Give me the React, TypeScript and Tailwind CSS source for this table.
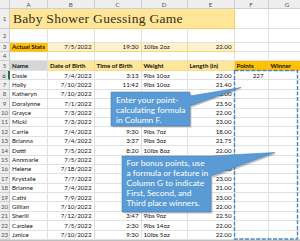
import React from 'react';

// cells hidden by the callouts are left blank
const data: string[][] = [
  ['Dasie', '7/4/2022', '3:13', '9lbs 10oz', '22.00', '227'],
  ['Holly', '7/10/2022', '11:42', '9lbs 10oz', '21.40', ''],
  ['Katheryn', '7/10/2022', '', '', '23.00', ''],
  ['Doralynne', '7/1/2022', '', '', '23.50', ''],
  ['Grayce', '7/3/2022', '', '', '22.00', ''],
  ['Micki', '7/3/2022', '', '', '23.00', ''],
  ['Carrie', '7/4/2022', '9:30', '9lbs 7oz', '18.00', ''],
  ['Brianna', '7/4/2022', '3:37', '9lbs 3oz', '21.75', ''],
  ['Dotti', '7/5/2022', '8:20', '10lbs 8oz', '22.00', ''],
  ['Annmarie', '7/5/2022', '', '', '22.00', ''],
  ['Helene', '7/18/2022', '', '', '22.00', ''],
  ['Krystalle', '7/7/2022', '', '', '23.00', ''],
  ['Brianne', '7/4/2022', '', '', '21.00', ''],
  ['Cathi', '7/9/2022', '', '', '23.00', ''],
  ['Gillian', '7/10/2022', '', '', '22.00', ''],
  ['Sherill', '7/12/2022', '3:47', '9lbs 9oz', '22.50', ''],
  ['Carolee', '7/5/2022', '2:30', '9lbs 14oz', '22.00', ''],
  ['Janice', '7/10/2022', '9:30', '10lbs 5oz', '22.00', ''],
];

const cell = 'border-r border-b border-[#e1e1e1] flex items-center px-[2px] whitespace-nowrap';
const num = 'bg-[#eeeeee] border-r border-b border-[#cfcfcf] flex items-center justify-center text-[#555]';

export default function App() {
  return (
    <div className="relative w-[300px] h-[241px] overflow-hidden bg-white text-[6.2px] text-[#111] font-['Lato',sans-serif]">
      <div className="grid grid-cols-[10px_38px_46.5px_47px_46px_47px_34px_38px] grid-rows-[9.3px_20px_13.4px_9px_9.3px_10px_repeat(18,9.4px)]">
        {/* column letters */}
        <div className={num} />
        {['A', 'B', 'C', 'D', 'E', 'F', 'G'].map((c) => (
          <div key={c} className={num}>{c}</div>
        ))}

        {/* row 1 title */}
        <div className={num}>1</div>
        <div className="col-span-5 bg-[#ffe699] border-b border-[#f4cf6a] border-r flex items-center pl-[3px] text-[13.5px] text-[#3a2c16] font-['Liberation_Serif',serif] tracking-[0.3px]">
          Baby Shower Guessing Game
        </div>
        <div className={cell} />
        <div className={cell} />

        {/* row 2 */}
        <div className={num}>2</div>
        {[0, 1, 2, 3, 4, 5, 6].map((i) => <div key={i} className={cell} />)}

        {/* row 3 actual stats */}
        <div className={num}>3</div>
        <div className="bg-[#ffc000] border-r border-b border-[#f2c44d] flex items-center px-[2px] font-bold whitespace-nowrap">Actual Stats</div>
        <div className="bg-[#fff2cc] border-r border-b border-[#f7d67a] flex items-center justify-end px-[2px]">7/5/2022</div>
        <div className="bg-[#fff2cc] border-r border-b border-[#f7d67a] flex items-center justify-end px-[2px]">19:30</div>
        <div className="bg-[#fff2cc] border-r border-b border-[#f7d67a] flex items-center px-[2px]">10lbs 2oz</div>
        <div className="bg-[#fff2cc] border-r border-b border-[#f7d67a] flex items-center justify-end px-[2px]">22.00</div>
        <div className={cell} />
        <div className={cell} />

        {/* row 4 */}
        <div className={num}>4</div>
        {[0, 1, 2, 3, 4, 5, 6].map((i) => <div key={i} className={cell} />)}

        {/* row 5 headers */}
        <div className={num}>5</div>
        <div className="bg-[#d6d6d6] border-r border-b border-[#e1e1e1] flex items-center px-[2px] font-bold">Name</div>
        <div className="bg-[#ffe699] border-r border-b border-[#f7dc8a] flex items-center px-[2px] font-bold whitespace-nowrap">Date of Birth</div>
        <div className="bg-[#ffe699] border-r border-b border-[#f7dc8a] flex items-center px-[2px] font-bold whitespace-nowrap">Time of Birth</div>
        <div className="bg-[#ffe699] border-r border-b border-[#f7dc8a] flex items-center px-[2px] font-bold">Weight</div>
        <div className="bg-[#ffe699] border-r border-b border-[#f7dc8a] flex items-center px-[2px] font-bold whitespace-nowrap">Length (in)</div>
        <div className="bg-[#ffc000] border-r border-b border-[#f2c44d] flex items-center px-[2px] font-bold">Points</div>
        <div className="bg-[#ffc000] border-r border-b border-[#f2c44d] flex items-center px-[2px] font-bold">Winner</div>

        {/* data rows */}
        {data.map((r, i) => (
          <React.Fragment key={r[0]}>
            <div className={i === 0 ? 'bg-[#e2e2e2] border-r-2 border-b border-r-[#217346] border-b-[#cfcfcf] flex items-center justify-center text-[#333]' : num}>{i + 6}</div>
            <div className={cell}>{r[0]}</div>
            <div className={cell + ' justify-end'}>{r[1]}</div>
            <div className={cell + ' justify-end'}>{r[2]}</div>
            <div className={cell}>{r[3]}</div>
            <div className={cell + ' justify-end'}>{r[4]}</div>
            <div className={cell + ' justify-end pr-[4px]'}>{r[5]}</div>
            <div className={cell} />
          </React.Fragment>
        ))}
      </div>

      {/* copy selection marquee */}
      <svg className="absolute left-0 top-0" width="300" height="241">
        <rect x="234.5" y="70.5" width="63" height="168.5" fill="none" stroke="#4a86c8" strokeWidth="1.4" strokeDasharray="4 1.6" />
      </svg>

      {/* callouts */}
      <svg className="absolute left-0 top-0" width="300" height="241">
        <path d="M112.5,93.5 H191.5 V97.5 L242.5,89 L191.5,107.5 V127.5 H112.5 Z" fill="#000" opacity="0.22" />
        <path d="M111,92 H190 V96 L241,87.5 L190,106 V126 H111 Z" fill="#5b9bd5" stroke="#4a82b8" strokeWidth="0.6" />
        <path d="M123.5,157.5 H212.5 L276.5,154 L212.5,178 V213.5 H123.5 Z" fill="#000" opacity="0.22" />
        <path d="M122,156 H211 L275,152.5 L211,176 V212 H122 Z" fill="#5b9bd5" stroke="#4a82b8" strokeWidth="0.6" />
      </svg>

      <div className="absolute left-[116px] top-[95px] w-[74px] text-white text-[8.4px] leading-[10px]">
        Enter your point-calculating formula in Column F.
      </div>
      <div className="absolute left-[126.5px] top-[158px] w-[84px] text-white text-[8.4px] leading-[10px]">
        For bonus points, use a formula or feature in Column G to indicate First, Second, and Third place winners.
      </div>

      <div className="absolute left-0 bottom-0 w-full h-[1.5px] bg-[#bdbdbd]" />
    </div>
  );
}
